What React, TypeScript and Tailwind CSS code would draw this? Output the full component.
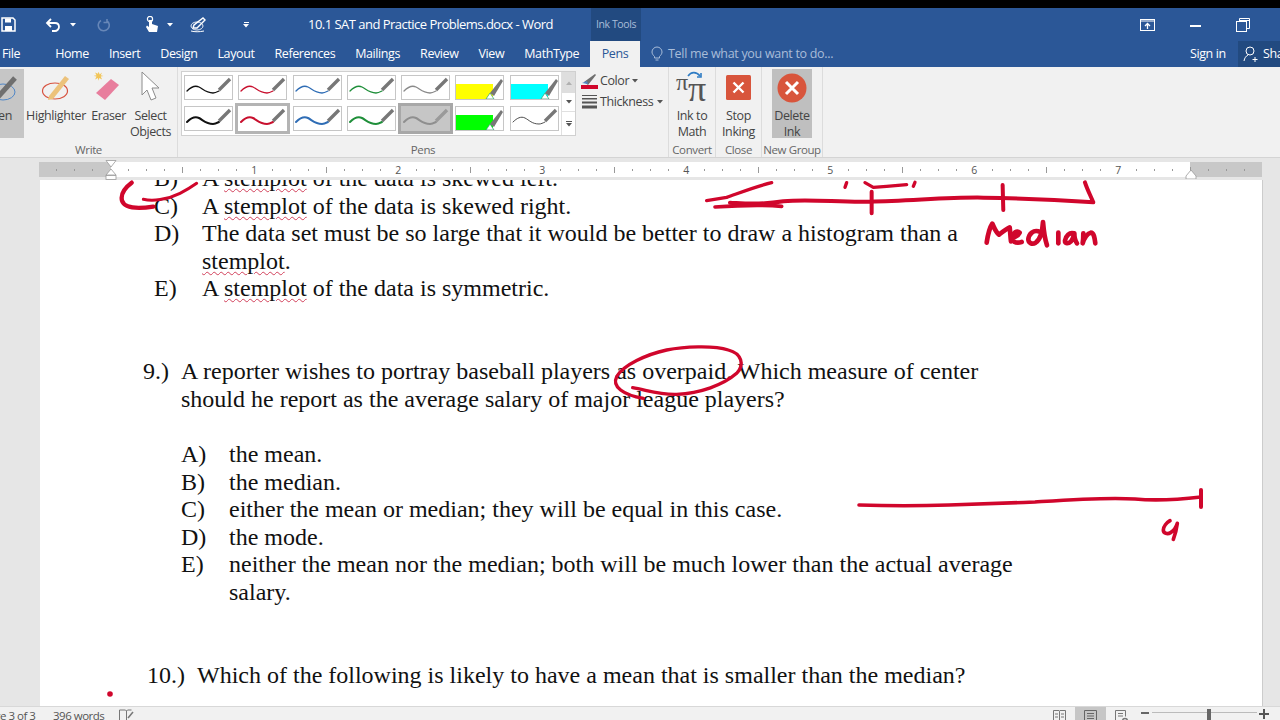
import type { FC, ReactNode } from 'react'

const tabs = ['Home', 'Insert', 'Design', 'Layout', 'References', 'Mailings', 'Review', 'View', 'MathType']

const penRows = [
    [
        { color: '#111111', kind: 'pen', width: 1.3 },
        { color: '#c8102e', kind: 'pen', width: 1.3 },
        { color: '#2f6db5', kind: 'pen', width: 1.3 },
        { color: '#1f8f3a', kind: 'pen', width: 1.3 },
        { color: '#8a8a8a', kind: 'pen', width: 1.3 },
        { color: '#ffff00', kind: 'marker', width: 0 },
        { color: '#00ffff', kind: 'marker', width: 0 },
    ],
    [
        { color: '#111111', kind: 'pen', width: 2 },
        { color: '#c8102e', kind: 'selected', width: 2 },
        { color: '#2f6db5', kind: 'pen', width: 2 },
        { color: '#1f8f3a', kind: 'pen', width: 2 },
        { color: '#8f8f8f', kind: 'active', width: 2 },
        { color: '#00ff00', kind: 'marker', width: 0 },
        { color: '#222222', kind: 'pen', width: 0.8 },
    ],
]

const Caret: FC<{ className?: string }> = ({ className }) => (
    <svg width="6" height="4" viewBox="0 0 6 4" className={className}>
        <path d="M0 0h6L3 3.5z" fill="currentColor" />
    </svg>
)

const PenSwatch: FC<{ color: string; kind: string; width: number }> = ({ color, kind, width }) => {
    const box =
        kind === 'selected'
            ? 'outline-[3px] outline-[#b4b4b4] bg-white'
            : kind === 'active'
              ? 'outline-[3px] outline-[#a8a8a8] bg-[#c6c6c6]'
              : 'border border-[#c6c6c6] bg-white'
    return (
        <div className={`flex h-[25px] w-[49px] shrink-0 items-center justify-center overflow-hidden ${box}`}>
            <svg width="49" height="25" viewBox="0 0 49 25" className="shrink-0">
                {kind === 'marker' ? (
                    <>
                        <rect x="1" y="9" width="37" height="16" fill={color} />
                        <path d="M31 24l4-6 4 6z" fill="#ffffff" stroke="#2f9f6f" strokeWidth="0.7" />
                        <path d="M35 18L46 4l2 2-9 15z" fill="#777777" />
                    </>
                ) : (
                    <>
                        <path
                            d="M3 16C7 12 11 10 15 12s7 6 14 6c2 0 4-1 6-2"
                            fill="none"
                            stroke={color}
                            strokeWidth={width}
                            strokeLinecap="round"
                        />
                        <path d="M35 15L46 4" stroke={kind === 'active' ? '#9a9a9a' : '#777777'} strokeWidth="3.4" />
                    </>
                )}
            </svg>
        </div>
    )
}

const Tool: FC<{ icon: ReactNode; lines: string[]; className?: string }> = ({ icon, lines, className }) => (
    <div className={`flex flex-col items-center ${className ?? ''}`}>
        <div className="flex h-[39px] shrink-0 items-end justify-center">{icon}</div>
        <div className="text-center text-[12.5px] leading-[16px] text-[#444444]">
            {lines.map((line) => (
                <div key={line} className="whitespace-nowrap">
                    {line}
                </div>
            ))}
        </div>
    </div>
)

const Group: FC<{ label: string; className: string; children: ReactNode }> = ({ label, className, children }) => (
    <div className={`flex shrink-0 flex-col border-r border-[#dcdcdc] ${className}`}>
        <div className="flex h-[71px] pt-[2px]">{children}</div>
        <div className="mt-[5px] text-center text-[11.5px] leading-[14px] whitespace-nowrap text-[#666666]">{label}</div>
    </div>
)

const Squiggle: FC<{ children: string }> = ({ children }) => (
    <span className="underline decoration-[#d2405a] decoration-wavy decoration-1 underline-offset-2">{children}</span>
)

const DocRow: FC<{ mark: string; cols: string; children: ReactNode; className?: string }> = ({
    mark,
    cols,
    children,
    className,
}) => (
    <div className={`grid whitespace-nowrap ${cols} ${className ?? ''}`}>
        <span>{mark}</span>
        <span>{children}</span>
    </div>
)

const Ruler: FC = () => {
    const ticks: number[] = []
    for (let x = 38; x < 1262; x += 18) ticks.push(x)
    return (
        <svg width="1223" height="15" viewBox="39 162 1223 15" className="ml-[39px] block">
            <rect x="39" y="162" width="72" height="15" fill="#c8c8c8" />
            <rect x="111" y="162" width="1079" height="15" fill="#ffffff" />
            <rect x="1190" y="162" width="72" height="15" fill="#c8c8c8" />
            {ticks.map((x) => {
                const n = Math.round((x - 110) / 18)
                if (n % 8 === 0) return null
                if (n % 4 === 0) return <rect key={x} x={x} y="167" width="1" height="6" fill="#999999" />
                return <rect key={x} x={x} y="169" width="1" height="2" fill="#999999" />
            })}
            {[1, 2, 3, 4, 5, 6, 7].map((n) => (
                <text
                    key={n}
                    x={110 + n * 144}
                    y="174"
                    textAnchor="middle"
                    fontSize="10.5"
                    fill="#555555"
                    fontFamily="'Open Sans', sans-serif"
                >
                    {n}
                </text>
            ))}
        </svg>
    )
}

// freehand ink, traced in 3x coordinates of each patch
const InkLayer: FC = () => (
    <svg
        className="pointer-events-none absolute inset-0"
        width="1280"
        height="526"
        viewBox="0 180 1280 526"
        fill="none"
        stroke="#d0062c"
        strokeLinecap="round"
        strokeLinejoin="round"
    >
        <g transform="translate(100 160) scale(0.3333)">
            <path d="M95 68C72 85 62 105 66 122c6 20 40 26 94 18" strokeWidth="13" />
            <path d="M130 118c28 6 70 2 110-18 20-10 36-20 50-30" strokeWidth="9" />
        </g>
        <g transform="translate(690 160) scale(0.3333)">
            <path d="M50 122l60-10c40-14 90-34 135-44" strokeWidth="10" />
            <path d="M120 128c40 2 90 8 160-4 80-8 170 4 260 1 120-2 240-14 340-12 120 2 240 8 330 14-8-20-18-38-25-60" strokeWidth="12" />
            <path d="M75 141c60-4 130-8 200-2" strokeWidth="11" />
            <path d="M545 95v65M938 75l2 75" strokeWidth="12" />
            <path d="M465 82l5-14M525 68l25 14 40-3 60-5M670 79l5-12" strokeWidth="10" />
        </g>
        <g transform="translate(975 212) scale(0.3333)" strokeWidth="14">
            <path d="M35 92C38 72 42 50 52 35c6 12 10 25 20 33 10-8 22-18 32-22 2 14 2 28 4 42" />
            <path d="M112 76c10 0 18-6 22-14-8-8-20 0-24 14 0 10 10 20 30 14" />
            <path d="M190 58c-14-4-28 6-30 24 0 12 12 16 22 10 12-8 20-28 22-62 2 24 4 46 12 70" />
            <path d="M250 62v32" />
            <path d="M296 64c-12-4-24 8-26 22-1 10 10 10 18 2 6-6 8-14 10-24 0 12 2 22 8 30" />
            <path d="M325 64c0 10 0 20-2 30 4-14 14-30 24-32 10 0 12 16 14 32" />
        </g>
        <path d="M859 505c30 1 60 1 90 0 36-1 60-2 86-3 30-2 70-5 100-3 22 2 40 1 66-2" strokeWidth="3.6" />
        <path d="M1201 490v17" strokeWidth="4" />
        <g transform="translate(1120 480) scale(0.3333)">
            <path d="M150 122c-10 6-20 18-20 28 0 10 12 14 22 8 10-6 16-14 20-28-2 16-6 32-12 48" strokeWidth="11" />
        </g>
        <g transform="translate(560 335) scale(0.3333)">
            <path
                d="M218 158C260 165 300 180 350 178C420 175 490 150 530 115C555 90 545 55 505 45C460 30 370 35 320 45C260 58 190 90 170 125C155 155 190 180 250 190"
                strokeWidth="10"
            />
        </g>
        <circle cx="110" cy="694" r="2.8" fill="#d0062c" stroke="none" />
    </svg>
)

const App: FC = () => {
    return (
        <div className="flex h-[720px] w-[1280px] flex-col overflow-hidden bg-black font-['Open_Sans',sans-serif] tracking-[-0.4px]">
            <div className="h-[8px] shrink-0 bg-black" />

            {/* title bar */}
            <div className="flex h-[33px] shrink-0 items-center bg-[#2b5797] text-white">
                <svg width="15" height="15" viewBox="0 0 15 15" className="ml-[1px]">
                    <path d="M1 1h11l2 2v11H1z" fill="none" stroke="#ffffff" strokeWidth="1.5" />
                    <rect x="4" y="1.5" width="6" height="4" fill="#ffffff" />
                    <rect x="4" y="9" width="7" height="5" fill="#ffffff" />
                </svg>
                <svg width="16" height="14" viewBox="0 0 16 14" className="ml-[29px]">
                    <path d="M6 1L2 5l4 4M2 5h8c3 0 4 2 4 4s-2 4-4 4H7" fill="none" stroke="#ffffff" strokeWidth="1.8" />
                </svg>
                <Caret className="ml-[9px] text-white" />
                <svg width="14" height="14" viewBox="0 0 14 14" className="ml-[20px]">
                    <path d="M5 2.5a5.5 5.5 0 1 0 6 .3M11 1v3.5H7.5" fill="none" stroke="#6787b8" strokeWidth="1.6" />
                </svg>
                <svg width="14" height="17" viewBox="0 0 14 17" className="ml-[35px]">
                    <circle cx="5" cy="3" r="2.6" fill="none" stroke="#ffffff" strokeWidth="1.2" />
                    <path d="M4 4v7L2 9.5 1 11l3 5h8l1-6-6-2V4z" fill="#ffffff" />
                </svg>
                <Caret className="ml-[8px] text-white" />
                <svg width="17" height="16" viewBox="0 0 17 16" className="ml-[17px]">
                    <path d="M1 14c4 1 8 1 13 0" fill="none" stroke="#ffffff" strokeWidth="1" />
                    <path d="M3 11l1-3 9-7 2 2-8 8z" fill="none" stroke="#ffffff" strokeWidth="1.4" />
                    <ellipse cx="7" cy="9" rx="6" ry="4" fill="none" stroke="#ffffff" strokeWidth="0.9" />
                </svg>
                <div className="ml-[36px] flex flex-col items-center gap-[1px]">
                    <div className="h-px w-[5px] bg-white" />
                    <Caret className="text-white" />
                </div>
                <div className="ml-[59px] w-[283px] text-[13px] tracking-[-0.52px] whitespace-nowrap">
                    10.1 SAT and Practice Problems.docx - Word
                </div>
                <div className="flex h-full w-[50px] items-center justify-center bg-[#224a80] text-[10.5px] whitespace-nowrap text-[#a9bdd9]">
                    Ink Tools
                </div>
                <svg width="15" height="12" viewBox="0 0 15 12" className="ml-[499px]">
                    <rect x="0.5" y="0.5" width="14" height="11" fill="none" stroke="#ffffff" />
                    <path d="M1 2h13" stroke="#ffffff" />
                    <path d="M7.5 10V4.5M5 7l2.5-2.5L10 7" fill="none" stroke="#ffffff" strokeWidth="1.3" />
                </svg>
                <div className="mt-[3px] ml-[35px] h-[2px] w-[11px] bg-white" />
                <svg width="14" height="14" viewBox="0 0 14 14" className="ml-[35px]">
                    <rect x="0.5" y="3.5" width="10" height="10" fill="none" stroke="#ffffff" />
                    <path d="M3.5 3V.5h10v10H11M3.5 2.5h10" fill="none" stroke="#ffffff" />
                </svg>
            </div>

            {/* ribbon tabs */}
            <div className="flex h-[26px] shrink-0 items-stretch bg-[#2b5797] text-[12.5px] text-white">
                <div className="flex w-[590px] shrink-0 items-center gap-[20px] pl-[2px]">
                    <span className="mr-[15px]">File</span>
                    {tabs.map((tab) => (
                        <span key={tab}>{tab}</span>
                    ))}
                </div>
                <div className="flex w-[50px] items-center justify-center bg-[#f1f1f1] text-[#2b5797]">Pens</div>
                <svg width="12" height="16" viewBox="0 0 12 16" className="mt-[5px] ml-[11px]" fill="none" stroke="#a9bdd9">
                    <path d="M3.5 10.5C2 9 1 7.7 1 6a5 5 0 0 1 10 0c0 1.7-1 3-2.5 4.5V12h-5zM4.5 14h3" />
                </svg>
                <div className="ml-[5px] flex w-[522px] items-center tracking-[-0.3px] text-[#a9bdd9]">Tell me what you want to do...</div>
                <div className="flex w-[48px] items-center">Sign in</div>
                <div className="flex flex-1 items-center gap-[5px] overflow-hidden bg-[#224a80] pl-[5px]">
                    <svg width="15" height="16" viewBox="0 0 15 16" fill="none" stroke="#ffffff" className="shrink-0">
                        <circle cx="7" cy="5" r="4" />
                        <path d="M1 15c.5-3 2-5 4-6M9.5 13.5h5M12 11v5" />
                    </svg>
                    <span className="whitespace-nowrap">Share</span>
                </div>
            </div>

            {/* ribbon */}
            <div className="flex h-[91px] shrink-0 border-b border-[#d4d4d4] bg-[#f1f1f1]">
                <Group label="Write" className="w-[178px]">
                    <div className="flex w-[24px] shrink-0 flex-col overflow-hidden bg-[#c6c6c6]">
                        <svg width="24" height="39" viewBox="0 0 24 39" className="shrink-0">
                            <ellipse cx="3" cy="23" rx="12" ry="8" fill="none" stroke="#4f86c6" strokeWidth="1" />
                            <path d="M-2 28L15 9" stroke="#6f6f6f" strokeWidth="5" />
                        </svg>
                        <div className="-ml-[9px] text-[12.5px] leading-[16px] text-[#444444]">Pen</div>
                    </div>
                    <Tool
                        className="ml-[1px] w-[62px]"
                        lines={['Highlighter']}
                        icon={
                            <svg width="30" height="30" viewBox="0 0 30 30" className="mb-[6px]">
                                <ellipse cx="14" cy="19" rx="12.5" ry="8" fill="none" stroke="#d7523f" strokeWidth="1.2" />
                                <path d="M8 24L24 4l4 3-16 20-5 1z" fill="#ecc27b" />
                            </svg>
                        }
                    />
                    <Tool
                        className="ml-[4px] w-[35px]"
                        lines={['Eraser']}
                        icon={
                            <svg width="30" height="30" viewBox="0 0 30 30" className="mb-[6px]">
                                <path d="M2 21L17 7l8 6-14 15z" fill="#e87e9d" />
                                <path d="M8 1l1.5 4L13 2l-2 4 4 1-4 1 2 4-4-2-1 4-1-4-4 2 2-4-4-1 4-1-2-4 4 2z" fill="#f2c557" transform="translate(-1 -1) scale(0.7)" />
                            </svg>
                        }
                    />
                    <Tool
                        className="ml-[3px] w-[43px]"
                        lines={['Select', 'Objects']}
                        icon={
                            <svg width="22" height="31" viewBox="0 0 22 31" className="mb-[6px]">
                                <path d="M2 1v23l5-5 4 10 5-2-4-10h7z" fill="#ffffff" stroke="#8c8c8c" />
                            </svg>
                        }
                    />
                </Group>

                <Group label="Pens" className="w-[491px]">
                    <div className="mt-[2px] ml-[3px] flex h-[65px] w-[395px] border border-[#d0d0d0] bg-white">
                        <div className="flex flex-1 flex-col gap-[6px] pt-[3px] pl-[2px]">
                            {penRows.map((row, i) => (
                                <div key={i} className="flex gap-[5.3px]">
                                    {row.map((pen, j) => (
                                        <PenSwatch key={j} {...pen} />
                                    ))}
                                </div>
                            ))}
                        </div>
                        <div className="flex w-[14px] shrink-0 flex-col border-l border-[#e0e0e0]">
                            <div className="flex h-[21px] items-center justify-center bg-[#dedede] text-[#b0b0b0]">
                                <Caret className="rotate-180" />
                            </div>
                            <div className="flex h-[19px] items-center justify-center border-b border-[#e0e0e0] text-[#555555]">
                                <Caret />
                            </div>
                            <div className="flex flex-1 flex-col items-center justify-center gap-[1px] text-[#555555]">
                                <div className="h-px w-[6px] bg-[#555555]" />
                                <Caret />
                            </div>
                        </div>
                    </div>
                    <div className="mt-[3px] ml-[5px] flex flex-col gap-[3px] text-[12.5px] text-[#444444]">
                        <div className="flex h-[18px] items-center">
                            <svg width="17" height="16" viewBox="0 0 17 16">
                                <path d="M3 9L14 1l1 1-8 10z" fill="#6f6f6f" />
                                <path d="M1 10l5-2 1 3z" fill="#4f86c6" />
                                <rect y="12" width="17" height="4" fill="#d0062c" />
                            </svg>
                            <span className="ml-[2px]">Color</span>
                            <Caret className="ml-[3px] text-[#555555]" />
                        </div>
                        <div className="flex h-[18px] items-center">
                            <svg width="15" height="14" viewBox="0 0 15 14" className="ml-[1px]">
                                <rect y="0" width="15" height="1" fill="#555555" />
                                <rect y="3" width="15" height="1.5" fill="#555555" />
                                <rect y="6.5" width="15" height="2" fill="#555555" />
                                <rect y="10.5" width="15" height="3" fill="#555555" />
                            </svg>
                            <span className="ml-[3px]">Thickness</span>
                            <Caret className="ml-[4px] text-[#555555]" />
                        </div>
                    </div>
                </Group>

                <Group label="Convert" className="w-[47px]">
                    <Tool
                        className="w-[46px]"
                        lines={['Ink to', 'Math']}
                        icon={
                            <svg width="34" height="34" viewBox="0 0 34 34" className="mb-[4px]">
                                <path d="M13 6C16 2 21 1 25 6" fill="none" stroke="#2f7cc4" strokeWidth="1.6" />
                                <path d="M22 7h4V3" fill="none" stroke="#2f7cc4" strokeWidth="1.6" />
                                <text x="1" y="20" fontSize="24" fill="#555555" fontFamily="'Liberation Serif', serif">π</text>
                                <text x="13" y="31" fontSize="36" fill="#555555" fontFamily="'Liberation Serif', serif">π</text>
                            </svg>
                        }
                    />
                </Group>

                <Group label="Close" className="w-[46px]">
                    <Tool
                        className="w-[45px]"
                        lines={['Stop', 'Inking']}
                        icon={
                            <svg width="25" height="25" viewBox="0 0 25 25" className="mb-[8px]">
                                <rect width="25" height="25" rx="1.5" fill="#d8553c" />
                                <path d="M7.5 7.5l10 10M17.5 7.5l-10 10" stroke="#ffffff" strokeWidth="2.4" />
                            </svg>
                        }
                    />
                </Group>

                <Group label="New Group" className="w-[61px]">
                    <Tool
                        className="ml-[10px] h-[69px] w-[40px] bg-[#bfbfbf]"
                        lines={['Delete', 'Ink']}
                        icon={
                            <svg width="30" height="30" viewBox="0 0 30 30" className="mb-[5px]">
                                <circle cx="15" cy="15" r="14.5" fill="#d8553c" />
                                <path d="M9 9l12 12M21 9L9 21" stroke="#ffffff" strokeWidth="3" />
                            </svg>
                        }
                    />
                </Group>
            </div>

            {/* ruler band */}
            <div className="relative h-[22px] shrink-0 bg-[#e6e6e6] pt-[4px]">
                <Ruler />
                <svg width="12" height="20" viewBox="0 0 12 20" className="absolute top-[2px] left-[105px]">
                    <path d="M1 .5h10L6 7z" fill="#ffffff" stroke="#9a9a9a" strokeWidth="0.8" />
                    <path d="M6 9l5 6H1z" fill="#ffffff" stroke="#9a9a9a" strokeWidth="0.8" />
                    <rect x="1" y="15.5" width="10" height="4" fill="#ffffff" stroke="#9a9a9a" strokeWidth="0.8" />
                </svg>
                <svg width="12" height="10" viewBox="0 0 12 10" className="absolute top-[11px] left-[1185px]">
                    <path d="M6 1l5 6v3H1V7z" fill="#ffffff" stroke="#9a9a9a" strokeWidth="0.8" />
                </svg>
            </div>

            {/* document */}
            <div className="relative flex min-h-0 flex-1 bg-[#e6e6e6]">
                <div className="w-[40px] shrink-0" />
                <div className="h-full w-[1222px] overflow-hidden bg-white font-['Liberation_Serif',serif] text-[24px] leading-[27.6px] tracking-normal text-[#111111]">
                    <div className="-mt-[15px]">
                        <div className="pl-[114px]">
                            <DocRow mark="B)" cols="grid-cols-[48px_1fr]">
                                A <Squiggle>stemplot</Squiggle> of the data is skewed left.
                            </DocRow>
                            <DocRow mark="C)" cols="grid-cols-[48px_1fr]">
                                A <Squiggle>stemplot</Squiggle> of the data is skewed right.
                            </DocRow>
                            <DocRow mark="D)" cols="grid-cols-[48px_1fr]">
                                The data set must be so large that it would be better to draw a histogram than a
                                <br />
                                <Squiggle>stemplot</Squiggle>.
                            </DocRow>
                            <DocRow mark="E)" cols="grid-cols-[48px_1fr]">
                                A <Squiggle>stemplot</Squiggle> of the data is symmetric.
                            </DocRow>
                        </div>

                        <DocRow mark="9.)" cols="grid-cols-[38px_1fr]" className="mt-[55.2px] pl-[103px]">
                            A reporter wishes to portray baseball players as overpaid. Which measure of center
                            <br />
                            should he report as the average salary of major league players?
                        </DocRow>

                        <div className="mt-[27.6px] pl-[141px]">
                            <DocRow mark="A)" cols="grid-cols-[48px_1fr]">the mean.</DocRow>
                            <DocRow mark="B)" cols="grid-cols-[48px_1fr]">the median.</DocRow>
                            <DocRow mark="C)" cols="grid-cols-[48px_1fr]">either the mean or median; they will be equal in this case.</DocRow>
                            <DocRow mark="D)" cols="grid-cols-[48px_1fr]">the mode.</DocRow>
                            <DocRow mark="E)" cols="grid-cols-[48px_1fr]">
                                neither the mean nor the median; both will be much lower than the actual average
                                <br />
                                salary.
                            </DocRow>
                        </div>

                        <DocRow mark="10.)" cols="grid-cols-[50px_1fr]" className="mt-[55.2px] pl-[107px]">
                            Which of the following is likely to have a mean that is smaller than the median?
                        </DocRow>
                    </div>
                </div>
                <div className="flex-1 border-l border-[#cccccc]" />
                <InkLayer />
            </div>

            {/* status bar */}
            <div className="flex h-[14px] shrink-0 overflow-hidden border-t border-[#d8d8d8] bg-[#f1f1f1] text-[11.5px] leading-[18px] tracking-[-0.5px] text-[#555555]">
                <div className="-ml-[18px] w-[71px] shrink-0 whitespace-nowrap">Page 3 of 3</div>
                <div className="w-[66px] shrink-0 whitespace-nowrap">396 words</div>
                <svg width="15" height="14" viewBox="0 0 15 14" className="shrink-0" fill="none" stroke="#777777">
                    <path d="M.5 3h6l1 1 1-1h4M.5 3v11M7.5 4v10" />
                    <path d="M9 11l5-6" strokeWidth="1.5" />
                </svg>
                <svg width="13" height="14" viewBox="0 0 13 14" className="mt-[3px] ml-[919px] shrink-0" fill="none" stroke="#777777">
                    <path d="M.5.5H6l.5 1 .5-1h5.5V14H.5zM6.5 1.5V14M2 4h3M2 7h3M8 4h3M8 7h3" />
                </svg>
                <div className="ml-[9px] flex w-[31px] shrink-0 justify-center bg-[#c6c6c6] pt-[3px]">
                    <svg width="13" height="14" viewBox="0 0 13 14" fill="none" stroke="#666666">
                        <path d="M.5.5h12V14H.5zM3 3.5h7M3 6h7M3 8.5h7" />
                    </svg>
                </div>
                <svg width="14" height="14" viewBox="0 0 14 14" className="mt-[3px] ml-[9px] shrink-0" fill="none" stroke="#777777">
                    <path d="M.5 12V.5h10v6M3 3.5h5M3 6h5" />
                    <circle cx="10" cy="11" r="2.5" strokeWidth="1.5" />
                </svg>
                <div className="mt-[5px] ml-[12px] h-[2px] w-[8px] shrink-0 bg-[#666666]" />
                <div className="relative mt-[5px] ml-[3px] h-px w-[105px] shrink-0 bg-[#bbbbbb]">
                    <div className="absolute -top-[3px] left-[55px] h-[12px] w-[4px] bg-[#666666]" />
                </div>
                <svg width="10" height="10" viewBox="0 0 10 10" className="mt-[2px] ml-[2px] shrink-0" stroke="#555555" strokeWidth="2">
                    <path d="M0 5h10M5 0v10" />
                </svg>
            </div>
        </div>
    )
}

export default App
